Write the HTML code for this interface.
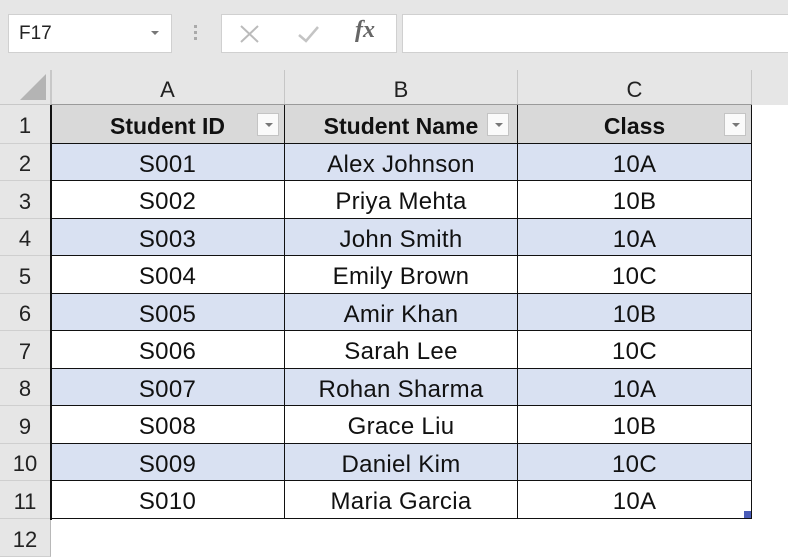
<!DOCTYPE html>
<html><head><style>
*{margin:0;padding:0;box-sizing:border-box}
body{width:788px;height:557px;overflow:hidden;background:#fff;position:relative;font-family:"Liberation Sans",sans-serif}
.a{position:absolute}
.top{left:0;top:0;width:788px;height:105px;background:#e6e6e6}
.box{background:#fff;border:1px solid #d0d0d0}
.ch{top:70px;height:35px;font-size:22px;color:#222;text-align:center;line-height:40px;border-right:1px solid #c6c6c6}
.rh{left:0;width:51px;background:#e6e6e6;border-right:1px solid #b8b8b8;border-bottom:1px solid #cfcfcf;font-size:22px;color:#222;text-align:center}
.c{font-size:24px;color:#111;text-align:center;border-right:1.5px solid #111;border-bottom:1.5px solid #111;letter-spacing:0.3px}
.dd{width:22px;height:23px;background:#fafafa;border:1px solid #c4c4c4;top:8px}
.dd:after{content:"";position:absolute;left:7px;top:9px;border-left:4px solid transparent;border-right:4px solid transparent;border-top:4px solid #777}
</style></head><body>
<div class="a top"></div>
<div class="a box" style="left:8px;top:14px;width:164px;height:39px;font-size:19px;color:#222;padding:8px 0 0 10px">F17</div>
<div class="a" style="left:151px;top:31px;border-left:4px solid transparent;border-right:4px solid transparent;border-top:4px solid #777"></div>
<div class="a" style="left:194px;top:25px;width:3px;height:3px;background:#aaa;box-shadow:0 6px #aaa,0 12px #aaa"></div>
<div class="a box" style="left:221px;top:14px;width:176px;height:39px"></div>
<svg class="a" style="left:238px;top:24px" width="24" height="20"><path d="M3 2L20 18M20 2L3 18" stroke="#bbb" stroke-width="2"/></svg>
<svg class="a" style="left:297px;top:24px" width="24" height="20"><path d="M2 11L9 17L21 3" stroke="#c4c4c4" stroke-width="2.5" fill="none"/></svg>
<div class="a" style="left:355px;top:17px;font-family:'Liberation Serif',serif;font-style:italic;font-weight:bold;font-size:24px;color:#666">fx</div>
<div class="a box" style="left:402px;top:14px;width:390px;height:39px"></div>
<svg class="a" style="left:0;top:70px" width="52" height="36"><path d="M20 30H46V4Z" fill="#b4b4b4"/><path d="M51 0V36M0 35H52" stroke="#bdbdbd" stroke-width="1.5"/></svg>
<div class="a ch" style="left:51px;width:234px">A</div>
<div class="a ch" style="left:285px;width:233px">B</div>
<div class="a ch" style="left:518px;width:234px">C</div>
<div class="a" style="left:51px;top:104px;width:701px;height:1.5px;background:#9a9a9a"></div>
<div id="g"></div>
<script>
var rows=[["Student ID","Student Name","Class"],["S001","Alex Johnson","10A"],["S002","Priya Mehta","10B"],["S003","John Smith","10A"],["S004","Emily Brown","10C"],["S005","Amir Khan","10B"],["S006","Sarah Lee","10C"],["S007","Rohan Sharma","10A"],["S008","Grace Liu","10B"],["S009","Daniel Kim","10C"],["S010","Maria Garcia","10A"]];
var ys=[105,144,181,219,256,294,331,369,406,444,481,519,557];
var xs=[51,285,518,752];var h="";
for(var i=0;i<12;i++){var t=ys[i],hh=ys[i+1]-t;
h+='<div class="a rh" style="top:'+t+'px;height:'+hh+'px;line-height:'+(hh+3)+'px">'+(i+1)+'</div>';
if(i<11){var bg=i==0?"#d9d9d9":(i%2==1?"#d9e1f2":"#fff");
for(var j=0;j<3;j++){h+='<div class="a c" style="left:'+xs[j]+'px;top:'+t+'px;width:'+(xs[j+1]-xs[j])+'px;height:'+hh+'px;line-height:'+(hh+4)+'px;background:'+bg+(i==0?';font-weight:bold;font-size:23px;letter-spacing:0':'')+'">'+rows[i][j]+(i==0?'<div class="a dd" style="left:'+(xs[j+1]-xs[j]-(j==1?31:28))+'px"></div>':'')+'</div>';}}}
document.getElementById("g").innerHTML=h;
</script>
<div class="a" style="left:50px;top:105px;width:1.5px;height:415px;background:#111"></div>
<div class="a" style="left:744px;top:511px;width:7px;height:7px;background:#4a5cb8"></div>
</body></html>
